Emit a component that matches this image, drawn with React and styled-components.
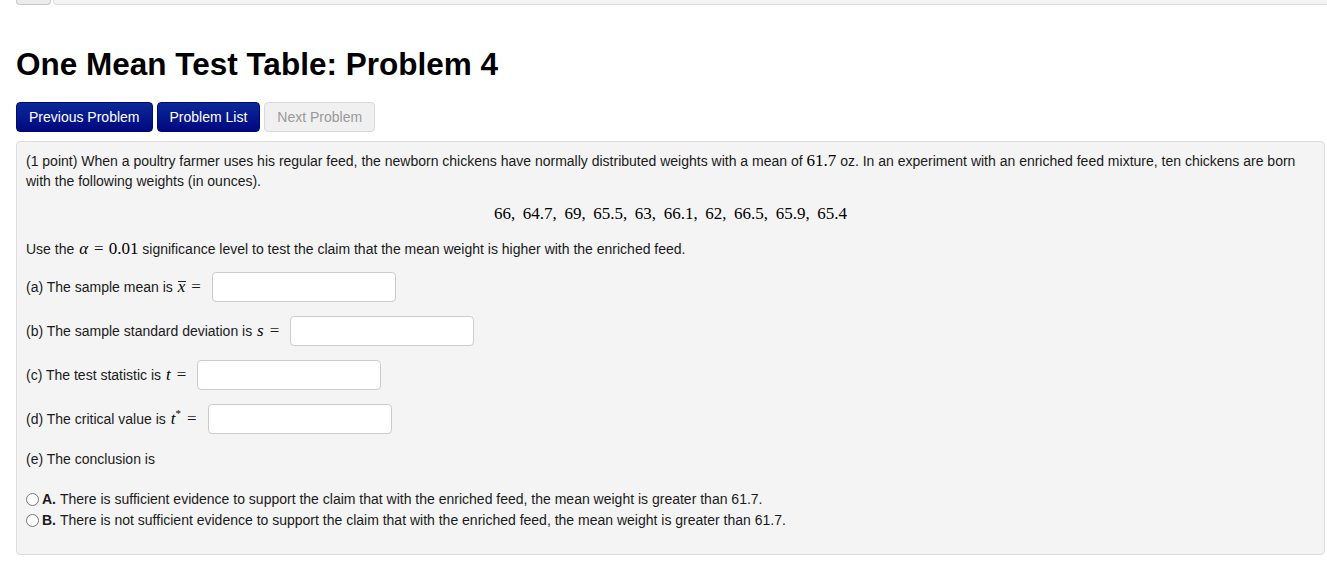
import React from "react";
import styled, { createGlobalStyle } from "styled-components";

const GlobalStyle = createGlobalStyle`
  html, body { margin: 0; padding: 0; background: #fff; }
  body {
    font-family: "Liberation Sans", Arial, sans-serif;
    font-size: 14px;
    line-height: 20px;
    color: #1a1a1a;
  }
  * { box-sizing: border-box; }
`;

const TopStrip = styled.div`
  display: flex;
  align-items: flex-start;
  height: 5px;
  padding-left: 16px;
`;

const StubButton = styled.div`
  width: 35px;
  height: 5px;
  background: #ececec;
  border: 1px solid #c8c8c8;
  border-top: none;
  border-radius: 0 0 4px 4px;
`;

const StubBar = styled.div`
  flex: 1;
  height: 5px;
  margin-left: 2px;
  background: #f4f4f4;
  border: 1px solid #dedede;
  border-top: none;
  border-right: none;
  border-radius: 0 0 0 4px;
`;

const Page = styled.div`
  padding: 0 2px 0 16px;
`;

const Title = styled.h1`
  margin: 42px 0 0;
  font-size: 31.5px;
  line-height: 34px;
  font-weight: bold;
  color: #000;
`;

const NavBar = styled.div`
  display: flex;
  gap: 4px;
  margin-top: 21px;
`;

const NavButton = styled.button`
  font-family: "Liberation Sans", Arial, sans-serif;
  font-size: 14px;
  line-height: 20px;
  height: 30px;
  padding: 4px 12px;
  border-radius: 4px;
  cursor: ${(p) => (p.disabled ? "default" : "pointer")};
  color: ${(p) => (p.disabled ? "#9a9a9a" : "#fff")};
  background: ${(p) =>
    p.disabled ? "#f0f0f0" : "linear-gradient(to bottom, #0c2897 0%, #000880 100%)"};
  border: 1px solid ${(p) => (p.disabled ? "#d9d9d9" : "#00096e")};
`;

const ProblemBox = styled.div`
  margin-top: 9px;
  background: #f4f4f4;
  border: 1px solid #dcdcdc;
  border-radius: 4px;
  padding: 9px 9px 24px;
`;

const Para = styled.p`
  margin: 0;
`;

const MathText = styled.span`
  font-family: "Liberation Serif", "Times New Roman", serif;
  font-size: 17px;
  line-height: 14px;
  color: #000;
`;

const MathVar = styled.i`
  position: relative;
  display: inline-block;
  font-family: "Liberation Serif", "Times New Roman", serif;
  font-size: 17px;
  line-height: 14px;
  font-style: italic;
  color: #000;
  padding: 0 1px;
  &::before {
    content: "";
    display: ${(p) => (p.$bar ? "block" : "none")};
    position: absolute;
    left: 1px;
    right: 0;
    top: 1px;
    border-top: 1px solid #222;
  }
`;

const Eq = styled.span`
  font-family: "Liberation Serif", "Times New Roman", serif;
  font-size: 17px;
  line-height: 14px;
  margin: 0 5px;
`;

const Star = styled.sup`
  font-size: 11px;
  line-height: 0;
  font-style: normal;
`;

const DataRow = styled.div`
  display: flex;
  justify-content: center;
  gap: 7.6px;
  margin: 13px 0 15px;
  font-family: "Liberation Serif", "Times New Roman", serif;
  font-size: 17px;
  line-height: 20px;
  color: #000;
`;

const QuestionRow = styled.div`
  display: flex;
  align-items: center;
  height: 30px;
  margin-top: ${(p) => p.$top}px;
`;

const QuestionLabel = styled.span`
  white-space: pre;
`;

const AnswerInput = styled.input`
  width: 184px;
  height: 30px;
  margin-left: 6px;
  border: 1px solid #cccccc;
  border-radius: 4px;
  background: #fff;
  font-size: 14px;
  padding: 4px 6px;
`;

const Conclusion = styled.div`
  margin-top: 15px;
`;

const Choices = styled.div`
  display: flex;
  flex-direction: column;
  margin-top: 20px;
`;

const Choice = styled.label`
  display: flex;
  align-items: center;
  height: 20.5px;
  color: #1a1a1a;
`;

const Radio = styled.input`
  appearance: none;
  width: 13px;
  height: 13px;
  margin: 1px 3px 0 0;
  border: 1px solid #767676;
  border-radius: 50%;
  background: #fff;
`;

const ChoiceLetter = styled.b`
  margin-right: 4px;
`;

const data = ["66", "64.7", "69", "65.5", "63", "66.1", "62", "66.5", "65.9", "65.4"];

const questions = [
  { label: "(a) The sample mean is ", v: <MathVar $bar>x</MathVar>, top: 13 },
  { label: "(b) The sample standard deviation is ", v: <MathVar>s</MathVar>, top: 14 },
  { label: "(c) The test statistic is ", v: <MathVar>t</MathVar>, top: 14 },
  {
    label: "(d) The critical value is ",
    v: (
      <MathVar>
        t<Star>*</Star>
      </MathVar>
    ),
    top: 14,
  },
];

export default function App() {
  return (
    <>
      <GlobalStyle />
      <TopStrip>
        <StubButton />
        <StubBar />
      </TopStrip>
      <Page>
        <Title>One Mean Test Table: Problem 4</Title>
        <NavBar>
          <NavButton>Previous Problem</NavButton>
          <NavButton>Problem List</NavButton>
          <NavButton disabled>Next Problem</NavButton>
        </NavBar>
        <ProblemBox>
          <Para>
            (1 point) When a poultry farmer uses his regular feed, the newborn chickens have
            normally distributed weights with a mean of <MathText>61.7</MathText> oz. In an
            experiment with an enriched feed mixture, ten chickens are born with the following
            weights (in ounces).
          </Para>
          <DataRow>
            {data.map((d, i) => (
              <span key={i}>
                {d}
                {i < data.length - 1 ? "," : ""}
              </span>
            ))}
          </DataRow>
          <Para>
            Use the <MathVar>α</MathVar>
            <Eq>=</Eq>
            <MathText>0.01</MathText> significance level to test the claim that the mean weight
            is higher with the enriched feed.
          </Para>
          {questions.map((q, i) => (
            <QuestionRow key={i} $top={q.top}>
              <QuestionLabel>{q.label}</QuestionLabel>
              {q.v}
              <Eq>=</Eq>
              <AnswerInput type="text" />
            </QuestionRow>
          ))}
          <Conclusion>(e) The conclusion is</Conclusion>
          <Choices>
            <Choice>
              <Radio type="radio" name="concl" />
              <ChoiceLetter>A.</ChoiceLetter>
              There is sufficient evidence to support the claim that with the enriched feed, the
              mean weight is greater than 61.7.
            </Choice>
            <Choice>
              <Radio type="radio" name="concl" />
              <ChoiceLetter>B.</ChoiceLetter>
              There is not sufficient evidence to support the claim that with the enriched feed,
              the mean weight is greater than 61.7.
            </Choice>
          </Choices>
        </ProblemBox>
      </Page>
    </>
  );
}
